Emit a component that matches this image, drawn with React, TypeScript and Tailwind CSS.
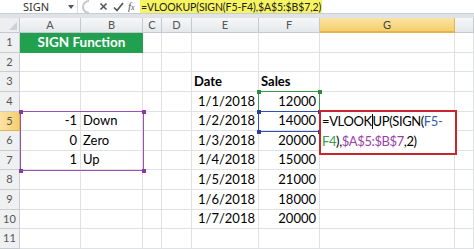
import React from "react";

// column widths (px) after the row-number gutter, and row heights
const COLS = ["A", "B", "C", "D", "E", "F", "G", "H"];
const WIDTHS: Record<string, string> = {
  A: "w-[61px]",
  B: "w-[62px]",
  C: "w-[19px]",
  D: "w-[30px]",
  E: "w-[67px]",
  F: "w-[61px]",
  G: "w-[135px]",
  H: "flex-1",
};
const ROW_H = [
  "h-[20px]",
  "h-[19px]",
  "h-[20px]",
  "h-[20px]",
  "h-[19px]",
  "h-[20px]",
  "h-[19px]",
  "h-[20px]",
  "h-[20px]",
  "h-[19px]",
  "h-[20px]",
];

type Cell = { v: string; right?: boolean; bold?: boolean };

const DATA: Record<string, Cell> = {
  E3: { v: "Date", bold: true },
  F3: { v: "Sales", bold: true },
  A5: { v: "-1", right: true },
  B5: { v: "Down" },
  A6: { v: "0", right: true },
  B6: { v: "Zero" },
  A7: { v: "1", right: true },
  B7: { v: "Up" },
};

const SALES = ["12000", "14000", "20000", "15000", "21000", "18000", "20000"];
SALES.forEach((s, i) => {
  DATA[`E${i + 4}`] = { v: `1/${i + 1}/2018`, right: true };
  DATA[`F${i + 4}`] = { v: s, right: true };
});

function FormulaBar() {
  return (
    <div className="flex h-[14px] bg-white border-b border-[#c9cdd2] text-[11px] leading-[14px]">
      <div className="relative w-[78px] border-r border-[#d9dde2] pl-[23px] text-[#333]">
        SIGN
        <span className="absolute left-[68px] top-[5px] w-0 h-0 border-l-[3px] border-r-[3px] border-t-[4px] border-l-transparent border-r-transparent border-t-[#555]" />
      </div>
      <div className="flex items-center w-[62px] bg-white">
        <svg width="10" height="14" viewBox="0 0 10 14" className="ml-[3px]">
          <path d="M8 1 A6 6 0 0 0 8 13" fill="none" stroke="#c8c8c8" strokeWidth="2" />
        </svg>
        <svg width="9" height="9" viewBox="0 0 9 9" className="ml-[8px]">
          <path d="M1.5 1.5 L7.5 7.5 M7.5 1.5 L1.5 7.5" stroke="#555" strokeWidth="1.6" />
        </svg>
        <svg width="11" height="10" viewBox="0 0 11 10" className="ml-[5px]">
          <path d="M1 5.5 L4 8.5 L10 1" fill="none" stroke="#555" strokeWidth="1.7" />
        </svg>
        <span className="ml-[4px] italic font-['Liberation_Serif',serif] text-[11px] text-[#555]">
          f<span className="text-[8px]">x</span>
        </span>
      </div>
      <div className="bg-[#f7f462] px-[1px] font-['Lato',sans-serif] text-[10.5px] text-[#222] tracking-[-0.1px]">
        =VLOOKUP(SIGN(F5-F4),$A$5:$B$7,2)
      </div>
      <div className="flex-1" />
    </div>
  );
}

function ColumnHeaders() {
  return (
    <div className="flex h-[15px] font-['Lato',sans-serif] text-[11px] leading-[14px] text-[#555]">
      <div className="relative w-[20px] border-r border-b border-[#c5c9cf] bg-[#eceef0]">
        <svg width="8" height="8" viewBox="0 0 8 8" className="absolute right-[2px] bottom-[2px]">
          <polygon points="8,0 8,8 0,8" fill="#cdd0d4" />
        </svg>
      </div>
      {COLS.map((c) =>
        c === "G" ? (
          <div
            key={c}
            className={`${WIDTHS[c]} text-center border-r border-b-2 border-[#e2b44a] bg-gradient-to-b from-[#fbe3a4] to-[#f5cf6c] text-[#444]`}
          >
            {c}
          </div>
        ) : (
          <div
            key={c}
            className={`${WIDTHS[c]} text-center border-r border-b border-[#c5c9cf] bg-gradient-to-b from-[#f6f7f8] to-[#e5e8eb]`}
          >
            {c === "H" ? "" : c}
          </div>
        ),
      )}
    </div>
  );
}

function Row({ r }: { r: number }) {
  const active = r === 5;
  return (
    <div className={`flex ${ROW_H[r - 1]} font-['Lato',sans-serif] text-[13px] text-black`}>
      <div
        className={`w-[20px] flex items-center justify-center border-r border-b text-[11px] ${
          active
            ? "bg-gradient-to-r from-[#fbe3a4] to-[#f5cf6c] border-[#e2b44a] text-[#555]"
            : "bg-[#eef0f2] border-[#c9ccd1] text-[#555]"
        }`}
      >
        {r}
      </div>
      {r === 1 ? (
        <div className="w-[123px] flex items-center justify-center bg-[#21a150] text-white font-bold text-[13.5px] border-b border-[#21a150]">
          SIGN Function
        </div>
      ) : null}
      {COLS.filter((c) => !(r === 1 && (c === "A" || c === "B"))).map((c) => {
        const cell = DATA[`${c}${r}`];
        return (
          <div
            key={c}
            className={`${WIDTHS[c]} flex items-center whitespace-nowrap border-r border-b border-[#dfe1e3] ${
              cell?.right ? "justify-end pr-[3px]" : "pl-[2px]"
            } ${cell?.bold ? "font-bold" : ""}`}
          >
            {cell?.v}
          </div>
        );
      })}
    </div>
  );
}

// small corner squares Excel draws on a referenced range
function Handles({ color }: { color: string }) {
  const sq = `absolute w-[4px] h-[4px] ${color}`;
  return (
    <>
      <span className={`${sq} -left-[2.5px] -top-[2.5px]`} />
      <span className={`${sq} -right-[2.5px] -top-[2.5px]`} />
      <span className={`${sq} -left-[2.5px] -bottom-[2.5px]`} />
      <span className={`${sq} -right-[2.5px] -bottom-[2.5px]`} />
    </>
  );
}

export default function App() {
  return (
    <div className="relative w-[474px] h-[249px] overflow-hidden bg-white select-none">
      <FormulaBar />
      <div className="h-[4px] bg-[#dfe3e8]" />
      <ColumnHeaders />
      {ROW_H.map((_, i) => (
        <Row key={i} r={i + 1} />
      ))}

      {/* range A5:B7 */}
      <div className="absolute left-[20px] top-[111px] w-[124px] h-[60px] border border-[#9b4fb0]">
        <Handles color="bg-[#8a3aa3]" />
      </div>
      {/* F4 reference */}
      <div className="absolute left-[258px] top-[91px] w-[62px] h-[21px] border border-[#3a9c4c]">
        <Handles color="bg-[#2e8a3e]" />
      </div>
      {/* F5 reference */}
      <div className="absolute left-[258px] top-[111px] w-[62px] h-[21px] border border-[#3050b0]">
        <Handles color="bg-[#2a3fa0]" />
      </div>

      {/* cell being edited, G5 */}
      <div className="absolute left-[319px] top-[110px] w-[138px] h-[45px] border-2 border-[#c9252d] bg-white pl-[1px] font-['Lato',sans-serif] text-[13px] tracking-[-0.4px] leading-[19.5px] text-black whitespace-nowrap overflow-hidden">
        <div>
          =VLOOK
          <span className="inline-block w-px h-[15px] align-[-3px] bg-black" />
          UP(SIGN(<span className="text-[#3c5ba8]">F5-</span>
        </div>
        <div>
          <span className="text-[#3a9c4c]">F4</span>),
          <span className="text-[#9a3fa8]">$A$5:$B$7</span>,2)
        </div>
      </div>
    </div>
  );
}
